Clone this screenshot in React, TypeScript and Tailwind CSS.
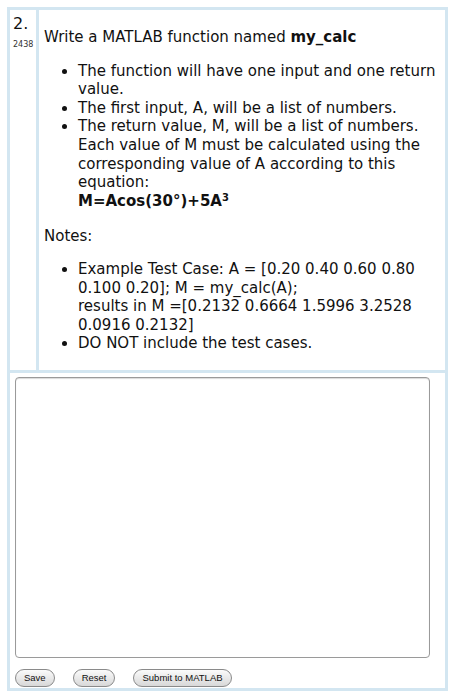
const font = { fontFamily: "'DejaVu Sans', Verdana, sans-serif" };

function PillButton({ label }: { label: string }) {
  return (
    <button className="h-[18px] rounded-full border border-[#8a8a8a] bg-gradient-to-b from-[#fbfbfb] to-[#d8d8d8] px-[8px] text-[9.5px] leading-none text-[#111] [font-family:'Liberation_Sans',Arial,sans-serif]">
      {label}
    </button>
  );
}

export default function App() {
  return (
    <div className="min-h-[700px] bg-white pl-[7px] pr-[8px] pt-[7px]">
      <div className="border-[3px] border-[#d3e6f1] text-[#111]" style={font}>
        <div className="flex border-b-[3px] border-[#d3e6f1]">
          <div className="w-[29px] shrink-0 border-r-[3px] border-[#d3e6f1] pl-[3px] pt-[4px]">
            <div className="text-[16px] leading-[20px]">2.</div>
            <div className="mt-[6px] text-[8px] leading-[10px] text-[#333]">2438</div>
          </div>
          <div className="flex-1 pb-[17px] pl-[5px] pr-[4px] pt-[18px] text-[15px] leading-[18.6px]">
            <div>
              Write a MATLAB function named <b>my_calc</b>
            </div>
            <ul className="mt-[15px] list-disc pl-[34px]">
              <li>The function will have one input and one return value.</li>
              <li>The first input, A, will be a list of numbers.</li>
              <li>
                The return value, M, will be a list of numbers. Each value of M must be
                calculated using the corresponding value of A according to this equation:
                <div className="font-bold">
                  M=Acos(30°)+5A<sup className="text-[10px]">3</sup>
                </div>
              </li>
            </ul>
            <div className="mt-[17px]">Notes:</div>
            <ul className="mt-[14px] list-disc pl-[34px]">
              <li>
                Example Test Case: A = [0.20 0.40 0.60 0.80 0.100 0.20]; M = my_calc(A);
                <br />
                results in M =[0.2132 0.6664 1.5996 3.2528 0.0916 0.2132]
              </li>
              <li>DO NOT include the test cases.</li>
            </ul>
          </div>
        </div>
        <div className="pb-[1px] pl-[5px] pt-[4px]">
          <textarea className="block h-[281px] w-[415px] resize-none rounded-[4px] border border-[#9a9a9a] shadow-[inset_0_1px_1px_rgba(0,0,0,0.15)] outline-none" />
          <div className="mt-[11px] flex gap-[18px]">
            <PillButton label="Save" />
            <PillButton label="Reset" />
            <PillButton label="Submit to MATLAB" />
          </div>
        </div>
      </div>
    </div>
  );
}
